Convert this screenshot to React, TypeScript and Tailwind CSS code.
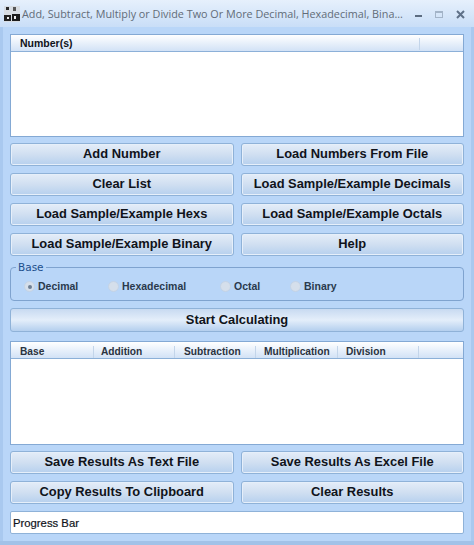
import React from 'react';

const btn =
  "h-[23px] pb-[1px] rounded-[3px] border border-[#8fb2d8] bg-gradient-to-b from-[#e4edf8] via-[#d0dff1] to-[#b6d0ee] text-[12.9px] font-bold text-[#10131a] flex items-center justify-center shadow-[inset_0_0_0_1px_#e6effa]";

function Btn({ label }: { label: string }) {
  return <button className={btn}>{label}</button>;
}

function Radio({ label, on, className }: { label: string; on?: boolean; className: string }) {
  return (
    <div className={"flex items-center gap-[3px] " + className}>
      <span className="w-[11px] h-[11px] rounded-full bg-[#d5dfeb] border border-[#c3d3e6] flex items-center justify-center">
        {on && <span className="w-[4px] h-[4px] rounded-full bg-[#6d7f94]" />}
      </span>
      <span>{label}</span>
    </div>
  );
}

function HeadCell({ label, className }: { label: string; className: string }) {
  return (
    <div className={"h-[12px] flex items-center border-r border-[#c3d5ea] " + className}>{label}</div>
  );
}

export default function App() {
  return (
    <div className="w-[474px] h-[545px] overflow-hidden bg-[#b9d6f8] font-['Liberation_Sans',Arial,sans-serif] flex flex-col">
      <div className="h-[27px] shrink-0 bg-gradient-to-b from-[#e6f0fc] to-[#c9def7] flex items-center pl-[4px] pr-[9px] pt-[1px]">
        <svg width="16" height="16" viewBox="0 0 16 16" className="shrink-0">
          <rect x="0" y="0" width="16" height="16" fill="#d8dde3" />
          <rect x="2" y="1" width="3" height="3" fill="#2a2a2a" />
          <rect x="9" y="1" width="3" height="4" fill="#555" />
          <rect x="0" y="9" width="7" height="6" fill="#222" />
          <rect x="8" y="8" width="8" height="7" fill="#1c1c1c" />
          <rect x="10" y="10" width="2" height="3" fill="#eee" />
          <rect x="3" y="11" width="2" height="2" fill="#eee" />
        </svg>
        <span className="ml-[2px] text-[10.8px] text-[#626c78] whitespace-nowrap font-['Open_Sans',sans-serif]">
          Add, Subtract, Multiply or Divide Two Or More Decimal, Hexadecimal, Bina...
        </span>
        <div className="ml-auto flex items-center gap-[13px] text-[#5d6f84]">
          <span className="w-[7px] h-[2px] bg-[#5c6c80] mt-[3px]" />
          <span className="w-[8px] h-[7px] border border-[#a3b4c8] border-t-2" />
          <svg width="9" height="9" viewBox="0 0 9 9">
            <path d="M1 1 L8 8 M8 1 L1 8" stroke="#5f7188" strokeWidth="2" />
          </svg>
        </div>
      </div>

      <div className="flex-1 border-l-[3px] border-r-[3px] border-[#a9c9ef] px-[7px] pt-[7px] flex flex-col">
        <div className="h-[103px] shrink-0 border border-[#84a9d4] bg-white flex flex-col">
          <div className="h-[17px] shrink-0 pt-[1px] bg-gradient-to-b from-[#ffffff] to-[#d2e2f6] border-b border-[#8cb0d8] flex items-center justify-between text-[10.5px] font-bold text-[#10131a]">
            <span className="pl-[9px]">Number(s)</span>
            <span className="w-px h-[12px] bg-[#c3d5ea] mr-[43px]" />
          </div>
        </div>

        <div className="grid grid-cols-2 gap-x-[7px] gap-y-[7px] mt-[6px] [&>button]:w-full">
          <Btn label="Add Number" />
          <Btn label="Load Numbers From File" />
          <Btn label="Clear List" />
          <Btn label="Load Sample/Example Decimals" />
          <Btn label="Load Sample/Example Hexs" />
          <Btn label="Load Sample/Example Octals" />
          <Btn label="Load Sample/Example Binary" />
          <Btn label="Help" />
        </div>

        <div className="relative h-[34px] shrink-0 mt-[11px] rounded-[4px] border border-[#7fa3cf] flex items-center text-[10.5px] font-bold text-[#2a3a4c] pl-[13px] pt-[5px]">
          <span className="absolute left-[5px] -top-[8px] bg-[#b9d6f8] px-[2px] font-normal text-[#1d4f8c] font-['DejaVu_Sans',sans-serif] text-[10.5px]">
            Base
          </span>
          <Radio label="Decimal" on className="w-[84px]" />
          <Radio label="Hexadecimal" className="w-[112px]" />
          <Radio label="Octal" className="w-[70px]" />
          <Radio label="Binary" className="" />
        </div>

        <button className="h-[24px] shrink-0 mt-[7px] rounded-[3px] border border-[#8fb2d8] bg-gradient-to-b from-[#c8daf1] via-[#e4eefa] to-[#b4cfee] text-[12.9px] font-bold text-[#10131a] flex items-center justify-center">
          Start Calculating
        </button>

        <div className="h-[104px] shrink-0 mt-[9px] border border-[#84a9d4] bg-white flex flex-col">
          <div className="h-[17px] shrink-0 bg-gradient-to-b from-[#ffffff] to-[#d2e2f6] border-b border-[#8cb0d8] flex items-center pt-[3px] text-[10.2px] font-bold text-[#2a3340]">
            <HeadCell label="Base" className="w-[83px] pl-[9px]" />
            <HeadCell label="Addition" className="w-[81px] pl-[7px]" />
            <HeadCell label="Subtraction" className="w-[81px] pl-[9px]" />
            <HeadCell label="Multiplication" className="w-[82px] pl-[8px]" />
            <HeadCell label="Division" className="w-[81px] pl-[8px]" />
          </div>
        </div>

        <div className="grid grid-cols-2 gap-x-[7px] gap-y-[7px] mt-[6px] [&>button]:w-full">
          <Btn label="Save Results As Text File" />
          <Btn label="Save Results As Excel File" />
          <Btn label="Copy Results To Clipboard" />
          <Btn label="Clear Results" />
        </div>

        <div className="h-[23px] shrink-0 mt-[7px] pt-[1px] rounded-[2px] border border-[#8fb2d8] bg-white flex items-center pl-[2px] text-[11.3px] font-normal text-[#10131a] [-webkit-text-stroke:0.2px_#10131a]">
          Progress Bar
        </div>
      </div>

      <div className="h-[4px] shrink-0 bg-[#a2c2e8]" />
    </div>
  );
}
